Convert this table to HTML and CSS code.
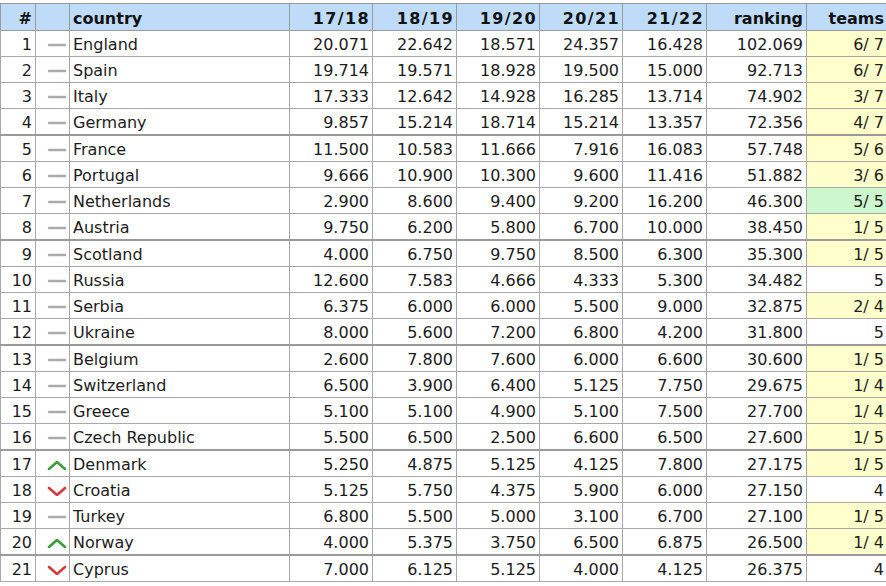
FILE: index.html
```html
<!DOCTYPE html>
<html>
<head>
<meta charset="utf-8">
<link rel="stylesheet" href="styles.css">
</head>
<body>
<table class="rank">
<colgroup>
<col class="c-pos"><col class="c-ico"><col class="c-country"><col class="c-yr"><col class="c-yr2"><col class="c-yr"><col class="c-yr"><col class="c-yr2"><col class="c-rank"><col class="c-teams">
</colgroup>
<thead>
<tr><th class="num">#</th><th></th><th class="txt">country</th><th class="num yr">17/18</th><th class="num yr">18/19</th><th class="num yr">19/20</th><th class="num yr">20/21</th><th class="num yr">21/22</th><th class="num">ranking</th><th class="num">teams</th></tr>
</thead>
<tbody>
<tr><td class="num">1</td><td class="ico"><svg class="i" viewBox="0 0 20 10"><line x1="2" y1="5" x2="18" y2="5" class="flat"/></svg></td><td class="txt">England</td><td class="num">20.071</td><td class="num">22.642</td><td class="num">18.571</td><td class="num">24.357</td><td class="num">16.428</td><td class="num">102.069</td><td class="num y">6/ 7</td></tr>
<tr><td class="num">2</td><td class="ico"><svg class="i" viewBox="0 0 20 10"><line x1="2" y1="5" x2="18" y2="5" class="flat"/></svg></td><td class="txt">Spain</td><td class="num">19.714</td><td class="num">19.571</td><td class="num">18.928</td><td class="num">19.500</td><td class="num">15.000</td><td class="num">92.713</td><td class="num y">6/ 7</td></tr>
<tr><td class="num">3</td><td class="ico"><svg class="i" viewBox="0 0 20 10"><line x1="2" y1="5" x2="18" y2="5" class="flat"/></svg></td><td class="txt">Italy</td><td class="num">17.333</td><td class="num">12.642</td><td class="num">14.928</td><td class="num">16.285</td><td class="num">13.714</td><td class="num">74.902</td><td class="num y">3/ 7</td></tr>
<tr class="sep"><td class="num">4</td><td class="ico"><svg class="i" viewBox="0 0 20 10"><line x1="2" y1="5" x2="18" y2="5" class="flat"/></svg></td><td class="txt">Germany</td><td class="num">9.857</td><td class="num">15.214</td><td class="num">18.714</td><td class="num">15.214</td><td class="num">13.357</td><td class="num">72.356</td><td class="num y">4/ 7</td></tr>
<tr><td class="num">5</td><td class="ico"><svg class="i" viewBox="0 0 20 10"><line x1="2" y1="5" x2="18" y2="5" class="flat"/></svg></td><td class="txt">France</td><td class="num">11.500</td><td class="num">10.583</td><td class="num">11.666</td><td class="num">7.916</td><td class="num">16.083</td><td class="num">57.748</td><td class="num y">5/ 6</td></tr>
<tr><td class="num">6</td><td class="ico"><svg class="i" viewBox="0 0 20 10"><line x1="2" y1="5" x2="18" y2="5" class="flat"/></svg></td><td class="txt">Portugal</td><td class="num">9.666</td><td class="num">10.900</td><td class="num">10.300</td><td class="num">9.600</td><td class="num">11.416</td><td class="num">51.882</td><td class="num y">3/ 6</td></tr>
<tr><td class="num">7</td><td class="ico"><svg class="i" viewBox="0 0 20 10"><line x1="2" y1="5" x2="18" y2="5" class="flat"/></svg></td><td class="txt">Netherlands</td><td class="num">2.900</td><td class="num">8.600</td><td class="num">9.400</td><td class="num">9.200</td><td class="num">16.200</td><td class="num">46.300</td><td class="num g">5/ 5</td></tr>
<tr class="sep"><td class="num">8</td><td class="ico"><svg class="i" viewBox="0 0 20 10"><line x1="2" y1="5" x2="18" y2="5" class="flat"/></svg></td><td class="txt">Austria</td><td class="num">9.750</td><td class="num">6.200</td><td class="num">5.800</td><td class="num">6.700</td><td class="num">10.000</td><td class="num">38.450</td><td class="num y">1/ 5</td></tr>
<tr><td class="num">9</td><td class="ico"><svg class="i" viewBox="0 0 20 10"><line x1="2" y1="5" x2="18" y2="5" class="flat"/></svg></td><td class="txt">Scotland</td><td class="num">4.000</td><td class="num">6.750</td><td class="num">9.750</td><td class="num">8.500</td><td class="num">6.300</td><td class="num">35.300</td><td class="num y">1/ 5</td></tr>
<tr><td class="num">10</td><td class="ico"><svg class="i" viewBox="0 0 20 10"><line x1="2" y1="5" x2="18" y2="5" class="flat"/></svg></td><td class="txt">Russia</td><td class="num">12.600</td><td class="num">7.583</td><td class="num">4.666</td><td class="num">4.333</td><td class="num">5.300</td><td class="num">34.482</td><td class="num">5</td></tr>
<tr><td class="num">11</td><td class="ico"><svg class="i" viewBox="0 0 20 10"><line x1="2" y1="5" x2="18" y2="5" class="flat"/></svg></td><td class="txt">Serbia</td><td class="num">6.375</td><td class="num">6.000</td><td class="num">6.000</td><td class="num">5.500</td><td class="num">9.000</td><td class="num">32.875</td><td class="num y">2/ 4</td></tr>
<tr class="sep"><td class="num">12</td><td class="ico"><svg class="i" viewBox="0 0 20 10"><line x1="2" y1="5" x2="18" y2="5" class="flat"/></svg></td><td class="txt">Ukraine</td><td class="num">8.000</td><td class="num">5.600</td><td class="num">7.200</td><td class="num">6.800</td><td class="num">4.200</td><td class="num">31.800</td><td class="num">5</td></tr>
<tr><td class="num">13</td><td class="ico"><svg class="i" viewBox="0 0 20 10"><line x1="2" y1="5" x2="18" y2="5" class="flat"/></svg></td><td class="txt">Belgium</td><td class="num">2.600</td><td class="num">7.800</td><td class="num">7.600</td><td class="num">6.000</td><td class="num">6.600</td><td class="num">30.600</td><td class="num y">1/ 5</td></tr>
<tr><td class="num">14</td><td class="ico"><svg class="i" viewBox="0 0 20 10"><line x1="2" y1="5" x2="18" y2="5" class="flat"/></svg></td><td class="txt">Switzerland</td><td class="num">6.500</td><td class="num">3.900</td><td class="num">6.400</td><td class="num">5.125</td><td class="num">7.750</td><td class="num">29.675</td><td class="num y">1/ 4</td></tr>
<tr><td class="num">15</td><td class="ico"><svg class="i" viewBox="0 0 20 10"><line x1="2" y1="5" x2="18" y2="5" class="flat"/></svg></td><td class="txt">Greece</td><td class="num">5.100</td><td class="num">5.100</td><td class="num">4.900</td><td class="num">5.100</td><td class="num">7.500</td><td class="num">27.700</td><td class="num y">1/ 4</td></tr>
<tr class="sep"><td class="num">16</td><td class="ico"><svg class="i" viewBox="0 0 20 10"><line x1="2" y1="5" x2="18" y2="5" class="flat"/></svg></td><td class="txt">Czech Republic</td><td class="num">5.500</td><td class="num">6.500</td><td class="num">2.500</td><td class="num">6.600</td><td class="num">6.500</td><td class="num">27.600</td><td class="num y">1/ 5</td></tr>
<tr><td class="num">17</td><td class="ico"><svg class="i" viewBox="0 0 20 10"><polyline points="2,9 10,2 18,9" class="up"/></svg></td><td class="txt">Denmark</td><td class="num">5.250</td><td class="num">4.875</td><td class="num">5.125</td><td class="num">4.125</td><td class="num">7.800</td><td class="num">27.175</td><td class="num y">1/ 5</td></tr>
<tr><td class="num">18</td><td class="ico"><svg class="i" viewBox="0 0 20 10"><polyline points="2,2 10,9 18,2" class="down"/></svg></td><td class="txt">Croatia</td><td class="num">5.125</td><td class="num">5.750</td><td class="num">4.375</td><td class="num">5.900</td><td class="num">6.000</td><td class="num">27.150</td><td class="num">4</td></tr>
<tr><td class="num">19</td><td class="ico"><svg class="i" viewBox="0 0 20 10"><line x1="2" y1="5" x2="18" y2="5" class="flat"/></svg></td><td class="txt">Turkey</td><td class="num">6.800</td><td class="num">5.500</td><td class="num">5.000</td><td class="num">3.100</td><td class="num">6.700</td><td class="num">27.100</td><td class="num y">1/ 5</td></tr>
<tr class="sep"><td class="num">20</td><td class="ico"><svg class="i" viewBox="0 0 20 10"><polyline points="2,9 10,2 18,9" class="up"/></svg></td><td class="txt">Norway</td><td class="num">4.000</td><td class="num">5.375</td><td class="num">3.750</td><td class="num">6.500</td><td class="num">6.875</td><td class="num">26.500</td><td class="num y">1/ 4</td></tr>
<tr><td class="num">21</td><td class="ico"><svg class="i" viewBox="0 0 20 10"><polyline points="2,2 10,9 18,2" class="down"/></svg></td><td class="txt">Cyprus</td><td class="num">7.000</td><td class="num">6.125</td><td class="num">5.125</td><td class="num">4.000</td><td class="num">4.125</td><td class="num">26.375</td><td class="num">4</td></tr>
</tbody>
</table>
</body>
</html>
```
FILE: styles.css
```css
html, body {
  margin: 0;
  padding: 0;
  background: #ffffff;
}
body {
  padding-top: 3px;
  font-family: "DejaVu Sans", Verdana, sans-serif;
  font-size: 16px;
  color: #1c1c1c;
}
.rank {
  border-collapse: collapse;
  table-layout: fixed;
  width: 887px;
}
.c-pos { width: 35px; }
.c-ico { width: 34px; }
.c-country { width: 220px; }
.c-yr { width: 83px; }
.c-yr2 { width: 84px; }
.c-rank { width: 100px; }
.c-teams { width: 81px; }

.rank th, .rank td {
  border: 1px solid #a8a8a8;
  padding: 3px 3px 0 3px;
  white-space: nowrap;
  overflow: hidden;
  line-height: 18px;
}
.rank th {
  background: #bedcf9;
  font-weight: bold;
  color: #111;
  padding-top: 4px;
  height: 22px;
  border-color: #9a9a9a;
}
.rank th.yr {
  letter-spacing: 1.4px;
  padding-right: 2px;
}
.rank td {
  height: 22px;
}
.rank tr.sep td {
  border-bottom: 2px solid #9a9a9a;
}
.num { text-align: right; }
.txt { text-align: left; }
.rank td.ico {
  padding: 3px 0 0 11px;
}
.i {
  display: block;
  width: 20px;
  height: 10px;
}
.flat {
  stroke: #ababab;
  stroke-width: 2.4;
  stroke-linecap: round;
}
.up {
  fill: none;
  stroke: #3c9e3c;
  stroke-width: 2.6;
  stroke-linecap: round;
  stroke-linejoin: round;
}
.down {
  fill: none;
  stroke: #d23c3c;
  stroke-width: 2.6;
  stroke-linecap: round;
  stroke-linejoin: round;
}
.y { background: #ffffcb; }
.g { background: #cdf7cd; }
```
